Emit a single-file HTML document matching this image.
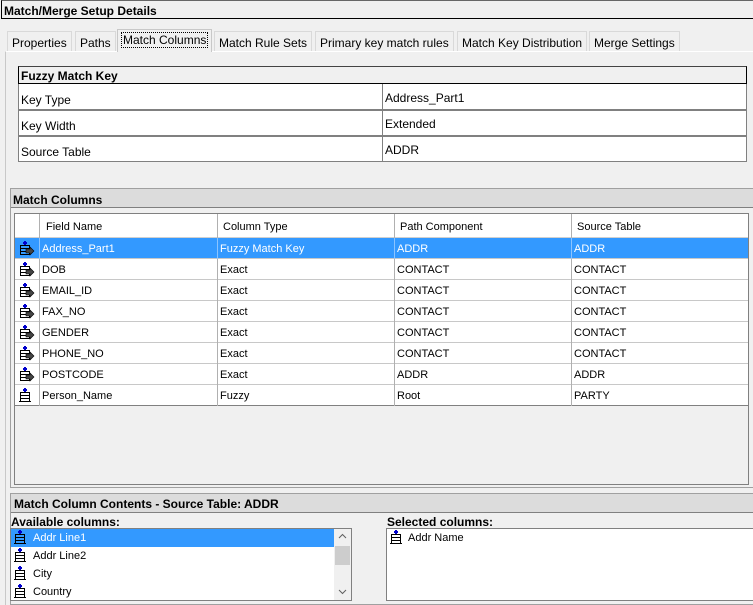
<!DOCTYPE html>
<html><head><style>
*{margin:0;padding:0;box-sizing:border-box}
body{width:753px;height:605px;background:#f0f0f0;font-family:"Liberation Sans",Arial,sans-serif;font-size:12px;color:#000;position:relative;overflow:hidden}
.a{position:absolute}
.b{font-weight:bold}
.tab{position:absolute;top:31px;height:20px;border:1px solid #d9d9d9;border-bottom:none;padding:4px 4px 0 4px;white-space:nowrap}
.row{position:absolute;left:15px;width:733px;height:21px;background:#fff;border-bottom:1px solid #c8c8c8}
.row div{position:absolute;top:0;height:21px;line-height:23px;border-left:1px solid #b0b0b0;padding-left:2px;font-size:11px}
.sel{background:#3399ff;color:#fff}
.ic{position:absolute;left:3px;top:3px}
</style></head><body>
<div class="a" style="left:1px;top:0;width:752px;height:19px;border:1px solid #000;border-right:none;border-top-color:#666;"></div>
<div class="a b" style="left:4px;top:4px">Match/Merge Setup Details</div>

<div class="a" style="left:5px;top:51px;width:748px;height:554px;border-left:1px solid #c8c8c8;border-top:1px solid #fff"></div>
<div class="tab" style="left:7px">Properties</div>
<div class="tab" style="left:75px">Paths</div>
<div class="tab" style="left:117px;top:29px;height:23px;background:#f0f0f0;border-color:#c8c8c8;padding-top:3px"><span style="outline:1px dotted #000;padding:0 1px">Match Columns</span></div>
<div class="tab" style="left:214px">Match Rule Sets</div>
<div class="tab" style="left:315px">Primary key match rules</div>
<div class="tab" style="left:457px">Match Key Distribution</div>
<div class="tab" style="left:589px">Merge Settings</div>

<div class="a b" style="left:18px;top:66px;width:729px;height:18px;border:1px solid #000;border-top-color:#444;padding:2px 0 0 2px">Fuzzy Match Key</div>
<div class="a" style="left:18px;top:84px;width:729px;height:78px;background:#fff;border:1px solid #808080;border-top:none"></div>
<div class="a" style="left:382px;top:84px;width:1px;height:77px;background:#808080"></div>
<div class="a" style="left:19px;top:109px;width:727px;height:2px;background:#808080"></div>
<div class="a" style="left:19px;top:135px;width:727px;height:2px;background:#808080"></div>
<div class="a" style="left:21px;top:93px">Key Type</div>
<div class="a" style="left:21px;top:119px">Key Width</div>
<div class="a" style="left:21px;top:145px">Source Table</div>
<div class="a" style="left:385px;top:91px">Address_Part1</div>
<div class="a" style="left:385px;top:117px">Extended</div>
<div class="a" style="left:385px;top:143px">ADDR</div>

<div class="a" style="left:10px;top:188px;width:743px;height:300px;border:1px solid #a0a0a0;border-right:none"></div>
<div class="a b" style="left:11px;top:189px;width:742px;height:19px;background:#dcdcdc;border-bottom:1px solid #808080;padding:4px 0 0 2px">Match Columns</div>
<div class="a" style="left:14px;top:213px;width:735px;height:272px;border:1px solid #808080;background:#f0f0f0"></div>
<div class="row" style="top:214px;height:24px;border-bottom:1px solid #d0d0d0">
<div style="left:0;border:none;width:24px;height:24px"></div>
<div style="left:24px;height:24px;line-height:26px;padding-left:6px">Field Name</div>
<div style="left:202px;height:24px;line-height:26px;padding-left:5px">Column Type</div>
<div style="left:379px;height:24px;line-height:26px;padding-left:5px">Path Component</div>
<div style="left:556px;height:24px;line-height:26px;padding-left:5px">Source Table</div>
</div>

<svg width="0" height="0" style="position:absolute"><defs>
<g id="k"><path d="M7 0v4M5 2h4" stroke="#0000cc" stroke-width="2"/><rect x="2.5" y="4.5" width="9" height="9" fill="none" stroke="#000"/><path d="M2 7.5h10M2 10.5h10" stroke="#000"/><path d="M8 8h4v-2l4 4-4 4v-2h-4z" fill="#444" stroke="#000" stroke-width=".6"/></g>
<g id="t"><path d="M7 0v4M5 2h4" stroke="#0000cc" stroke-width="2"/><rect x="2.5" y="4.5" width="9" height="9" fill="none" stroke="#000"/><path d="M2 7.5h10M2 10.5h10M1 13.5h12" stroke="#000"/></g>
</defs></svg>

<div class="row sel" style="top:238px"><svg class="ic" width="18" height="16"><use href="#k"/></svg><div style="left:24px;border-color:#8cc4ff">Address_Part1</div><div style="left:202px;border-color:#8cc4ff">Fuzzy Match Key</div><div style="left:379px;border-color:#8cc4ff">ADDR</div><div style="left:556px;border-color:#8cc4ff">ADDR</div></div>
<div class="row" style="top:259px"><svg class="ic" width="18" height="16"><use href="#k"/></svg><div style="left:24px">DOB</div><div style="left:202px">Exact</div><div style="left:379px">CONTACT</div><div style="left:556px">CONTACT</div></div>
<div class="row" style="top:280px"><svg class="ic" width="18" height="16"><use href="#k"/></svg><div style="left:24px">EMAIL_ID</div><div style="left:202px">Exact</div><div style="left:379px">CONTACT</div><div style="left:556px">CONTACT</div></div>
<div class="row" style="top:301px"><svg class="ic" width="18" height="16"><use href="#k"/></svg><div style="left:24px">FAX_NO</div><div style="left:202px">Exact</div><div style="left:379px">CONTACT</div><div style="left:556px">CONTACT</div></div>
<div class="row" style="top:322px"><svg class="ic" width="18" height="16"><use href="#k"/></svg><div style="left:24px">GENDER</div><div style="left:202px">Exact</div><div style="left:379px">CONTACT</div><div style="left:556px">CONTACT</div></div>
<div class="row" style="top:343px"><svg class="ic" width="18" height="16"><use href="#k"/></svg><div style="left:24px">PHONE_NO</div><div style="left:202px">Exact</div><div style="left:379px">CONTACT</div><div style="left:556px">CONTACT</div></div>
<div class="row" style="top:364px"><svg class="ic" width="18" height="16"><use href="#k"/></svg><div style="left:24px">POSTCODE</div><div style="left:202px">Exact</div><div style="left:379px">ADDR</div><div style="left:556px">ADDR</div></div>
<div class="row" style="top:385px;border-bottom-color:#808080"><svg class="ic" width="18" height="16"><use href="#t"/></svg><div style="left:24px">Person_Name</div><div style="left:202px">Fuzzy</div><div style="left:379px">Root</div><div style="left:556px">PARTY</div></div>

<div class="a" style="left:10px;top:493px;width:743px;height:112px;border:1px solid #a0a0a0;border-right:none"></div>
<div class="a b" style="left:11px;top:494px;width:742px;height:19px;background:#dcdcdc;border-bottom:1px solid #808080;padding:3px 0 0 3px">Match Column Contents - Source Table: ADDR</div>
<div class="a b" style="left:11px;top:515px">Available columns:</div>
<div class="a b" style="left:387px;top:515px">Selected columns:</div>
<div class="a" style="left:10px;top:528px;width:342px;height:73px;background:#fff;border:1px solid #808080"></div>
<div class="a sel" style="left:11px;top:529px;width:323px;height:18px"></div>
<div class="a" style="left:334px;top:529px;width:17px;height:71px;background:#f0f0f0"></div>
<div class="a" style="left:335px;top:546px;width:15px;height:19px;background:#cdcdcd"></div>
<svg class="a" style="left:338px;top:533px" width="9" height="6"><path d="M1 5l3.5-3.5L8 5" fill="none" stroke="#606060"/></svg>
<svg class="a" style="left:338px;top:589px" width="9" height="6"><path d="M1 1l3.5 3.5L8 1" fill="none" stroke="#606060"/></svg>
<svg class="a" style="left:13px;top:530px" width="16" height="16"><use href="#t"/></svg>
<svg class="a" style="left:13px;top:548px" width="16" height="16"><use href="#t"/></svg>
<svg class="a" style="left:13px;top:566px" width="16" height="16"><use href="#t"/></svg>
<svg class="a" style="left:13px;top:584px" width="16" height="16"><use href="#t"/></svg>
<div class="a" style="left:33px;top:532px;color:#fff;font-size:11px">Addr Line1</div>
<div class="a" style="left:33px;top:550px;font-size:11px">Addr Line2</div>
<div class="a" style="left:33px;top:568px;font-size:11px">City</div>
<div class="a" style="left:33px;top:586px;font-size:11px">Country</div>
<div class="a" style="left:386px;top:528px;width:367px;height:73px;background:#fff;border:1px solid #808080;border-right:none"></div>
<svg class="a" style="left:389px;top:530px" width="16" height="16"><use href="#t"/></svg>
<div class="a" style="left:408px;top:532px;font-size:11px">Addr Name</div>
</body></html>
